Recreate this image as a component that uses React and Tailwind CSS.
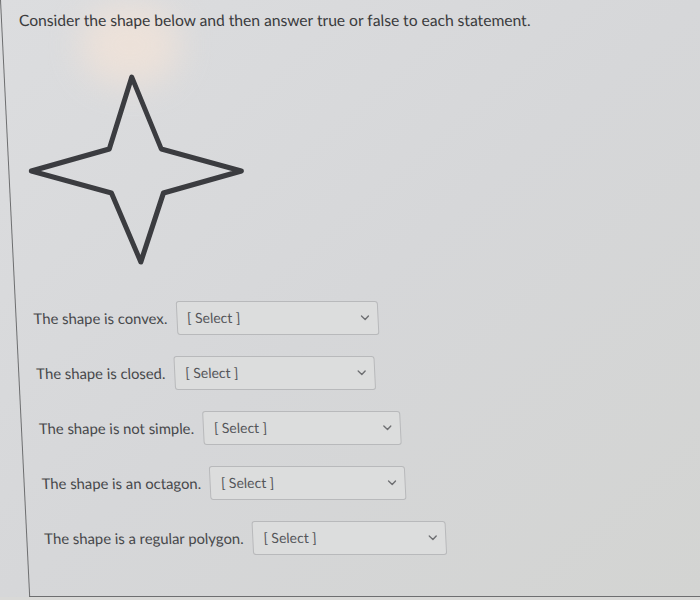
import React from "react";

const rows = [
  { t: "The shape is convex.", w: "w-[202px]" },
  { t: "The shape is closed.", w: "w-[201px]" },
  { t: "The shape is not simple.", w: "w-[198px]" },
  { t: "The shape is an octagon.", w: "w-[196px]" },
  { t: "The shape is a regular polygon.", w: "w-[194px]" },
];

function Chevron() {
  return (
    <svg width="9" height="6" viewBox="0 0 9 6" className="shrink-0">
      <path d="M1 1 L4.5 4.5 L8 1" fill="none" stroke="#6f7073" strokeWidth="1.4" strokeLinecap="round" strokeLinejoin="round" />
    </svg>
  );
}

function Star() {
  return (
    <svg width="240" height="200" viewBox="0 0 240 200" className="block ml-[-5px] mt-[38px]">
      <polygon
        points="115,7 141,79 220,101 141,123 115,192 89,123 10,101 89,79"
        fill="none"
        stroke="#3b3c40"
        strokeWidth="5"
        strokeLinejoin="round"
      />
    </svg>
  );
}

export default function App() {
  return (
    <div className="relative w-[700px] h-[600px] overflow-hidden bg-gradient-to-br from-[#dcdddf] via-[#d6d7d9] to-[#d3d4d2] font-['Lato','Open_Sans',sans-serif]">
      <div className="pointer-events-none absolute left-[80px] top-[5px] w-[100px] h-[80px] rounded-full bg-[#f4e4d8] opacity-70 blur-[16px]"></div>
      <div className="relative h-[597px] w-[740px] origin-top-left skew-x-[2.8deg] border-l-[1.5px] border-b-[1.5px] border-[#6d6e70] pl-[17px]">
        <p className="pt-[8px] text-[15.6px] leading-[24px] text-[#3a3b3d]">
          Consider the shape below and then answer true or false to each statement.
        </p>
        <Star />
        <div className="mt-[31px] flex flex-col gap-[21px]">
          {rows.map((r) => (
            <div key={r.t} className="flex items-center h-[34px]">
              <span className="text-[14.8px] text-[#47484b] whitespace-nowrap">{r.t}</span>
              <div className={"ml-[9px] h-[34px] flex items-center justify-between rounded-[3px] border border-[#b8b9bb] bg-[#dcdddd] pl-[10px] pr-[8px] " + r.w}>
                <span className="text-[14px] text-[#55565a] mt-[-2px]">[ Select ]</span>
                <Chevron />
              </div>
            </div>
          ))}
        </div>
      </div>
      <div className="h-[3px] bg-[#d9d9d7]"></div>
    </div>
  );
}
